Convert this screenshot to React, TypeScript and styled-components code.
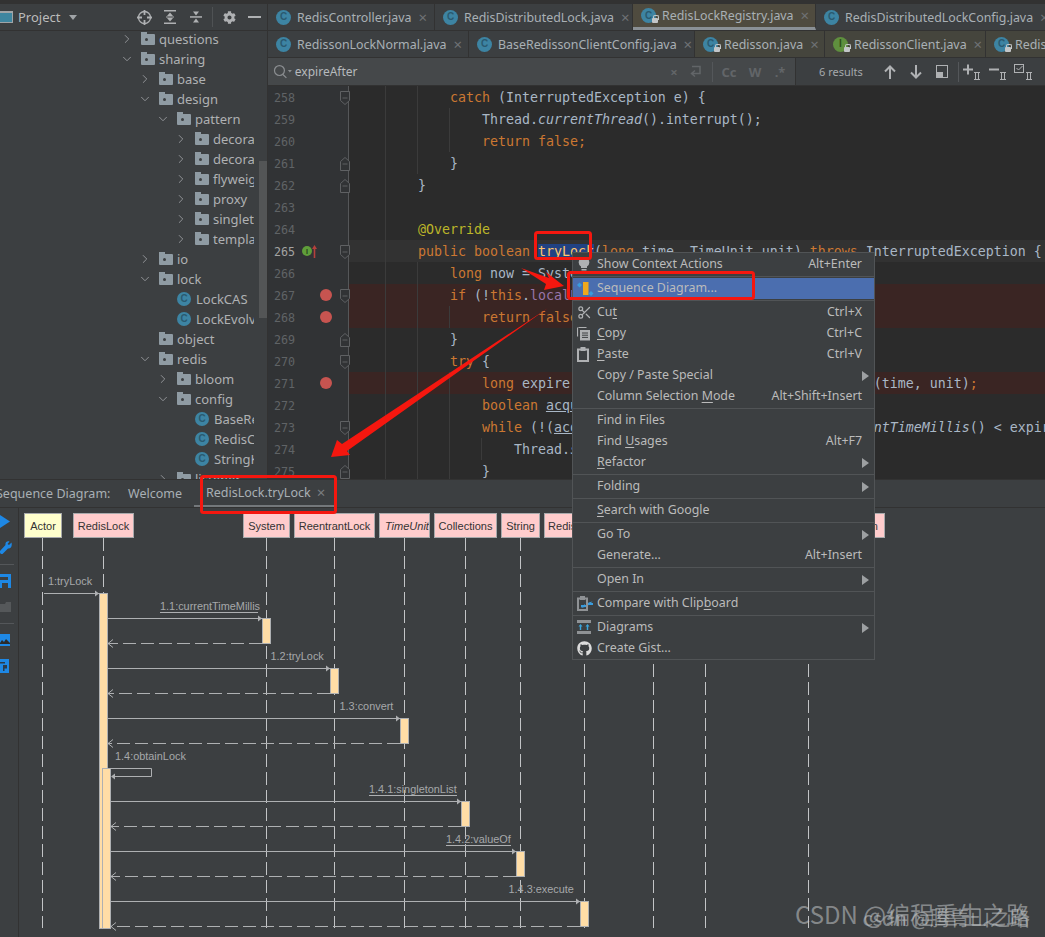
// App.tsx
import React from "react";
import styled, { createGlobalStyle } from "styled-components";
import { ChevronRight, ChevronDown, Scissors } from "lucide-react";
import { FaCog, FaGithub } from "react-icons/fa";

const uiFont = `"Noto Sans", "Open Sans", sans-serif`;
const monoFont = `"DejaVu Sans Mono", "Liberation Mono", monospace`;

const GlobalStyle = createGlobalStyle`
  html, body { margin: 0; padding: 0; background: #3c3f41; }
  * { box-sizing: border-box; }
`;

// Page shell
const Page = styled.div`
  position: relative;
  width: 1045px;
  height: 937px;
  overflow: hidden;
  display: flex;
  flex-direction: column;
  background: #3c3f41;
  font-family: ${uiFont};
  color: #bbbbbb;
`;

const TopArea = styled.div`
  display: flex;
  height: 479px;
  border-top: 4px solid #323232;
  flex: none;
`;

// Project panel
const ProjectPanel = styled.aside`
  position: relative;
  width: 268px;
  flex: none;
  border-right: 1px solid #323232;
  overflow: hidden;
`;

const PanelHeader = styled.div`
  position: relative;
  z-index: 1;
  height: 27px;
  display: flex;
  align-items: center;
  border-bottom: 1px solid #323232;
  background: #3c3f41;
  font-size: 13px;
`;

const ProjectSquare = styled.span`
  width: 13px;
  height: 12px;
  margin-right: 5px;
  flex: none;
  border: 1px solid #a0a4a7;
  border-left: none;
  border-top-width: 2px;
  background: #3e86a0;
`;

const Caret = styled.span`
  width: 0;
  height: 0;
  margin-left: 9px;
  flex: none;
  border-left: 4px solid transparent;
  border-right: 4px solid transparent;
  border-top: 5px solid #a0a4a7;
`;

const HeaderTools = styled.div`
  margin-left: 54px;
  display: flex;
  align-items: center;
  color: #afb1b3;
`;

const HeaderTool = styled.span<{ $w?: number }>`
  width: ${(p) => p.$w ?? 26}px;
  flex: none;
  display: flex;
  justify-content: center;
`;

const ToolDivider = styled.span`
  width: 1px;
  height: 20px;
  margin: 0 4px 0 3px;
  flex: none;
  background: #4f5254;
`;

const TreeClip = styled.div`
  width: 254px;
  margin-top: -2px;
  overflow: hidden;
`;

const TreeRow = styled.div<{ $depth: number }>`
  height: 20px;
  display: flex;
  align-items: center;
  padding-left: ${(p) => 120 + p.$depth * 18}px;
  font-size: 13px;
  white-space: nowrap;
  color: #afb1b3;
`;

const Twisty = styled.span`
  width: 14px;
  margin-right: 7px;
  flex: none;
  display: flex;
  justify-content: center;
  color: #9a9da0;
`;

const FolderMark = styled.span`
  position: relative;
  width: 14px;
  height: 11px;
  margin-right: 4px;
  flex: none;
  background: #8f9ba3;
  border-radius: 0 1px 1px 1px;
  &::before {
    content: "";
    position: absolute;
    left: 0;
    top: -2px;
    width: 6px;
    height: 2px;
    background: #8f9ba3;
  }
  &::after {
    content: "";
    position: absolute;
    left: 4px;
    top: 4px;
    width: 3px;
    height: 3px;
    border-radius: 50%;
    background: #3c3f41;
  }
`;

const ClassMark = styled.span<{ $kind?: "C" | "I"; $size?: number }>`
  position: relative;
  width: ${(p) => p.$size ?? 14}px;
  height: ${(p) => p.$size ?? 14}px;
  flex: none;
  display: flex;
  align-items: center;
  justify-content: center;
  border-radius: 50%;
  background: ${(p) => (p.$kind === "I" ? "#5f8f3e" : "#3d84a3")};
  color: ${(p) => (p.$kind === "I" ? "#2f4f1c" : "#2a5a70")};
  font-family: "Liberation Sans", sans-serif;
  font-size: 10px;
  font-weight: 700;
  line-height: 1;
`;

const TreeClass = styled(ClassMark)`
  margin-right: 5px;
`;

const ScrollThumb = styled.div`
  position: absolute;
  left: 259px;
  top: 157px;
  width: 8px;
  height: 157px;
  background: #535556;
`;

// Editor column
const EditorColumn = styled.section`
  flex: 1;
  min-width: 0;
  display: flex;
  flex-direction: column;
`;

const TabRow = styled.div`
  height: 27px;
  flex: none;
  display: flex;
  overflow: hidden;
  border-bottom: 1px solid #323232;
`;

const Tab = styled.div<{ $w: number; $active?: boolean; $tint?: boolean }>`
  position: relative;
  width: ${(p) => p.$w}px;
  flex: none;
  display: flex;
  align-items: center;
  padding-left: 8px;
  border-right: 1px solid #323232;
  font-size: 12.4px;
  white-space: nowrap;
  color: #a9b0b5;
  background: ${(p) =>
    p.$active ? "#4f4b3f" : p.$tint ? "#45453d" : "transparent"};
  ${(p) => (p.$active ? "border-bottom: 3px solid #8a9095;" : "")}
`;

const TabLabel = styled.span`
  margin: 0 7px 0 6px;
`;

const TabClose = styled.span`
  color: #6f7275;
  font-size: 15px;
  line-height: 1;
`;

const LockBadge = styled.span`
  position: absolute;
  right: -2px;
  bottom: 0;
  width: 6px;
  height: 5px;
  border-radius: 1px;
  background: #c3c6c8;
  &::before {
    content: "";
    position: absolute;
    left: 1px;
    top: -3px;
    width: 4px;
    height: 4px;
    border: 1px solid #c3c6c8;
    border-bottom: none;
    border-radius: 2px 2px 0 0;
  }
`;

const FindBar = styled.div`
  height: 28px;
  flex: none;
  display: flex;
  align-items: center;
  border-bottom: 1px solid #323232;
  font-size: 12px;
`;

const FindField = styled.div`
  width: 528px;
  height: 100%;
  flex: none;
  display: flex;
  align-items: center;
  padding-left: 5px;
  border-right: 1px solid #323232;
  background: #45484a;
  color: #b6babd;
`;

const FindText = styled.span`
  margin-left: 2px;
  width: 376px;
`;

const FindOption = styled.span<{ $w: number }>`
  width: ${(p) => p.$w}px;
  flex: none;
  display: flex;
  justify-content: center;
  color: #626568;
  font-weight: 700;
  font-size: 13px;
`;

const FindRule = styled.span`
  width: 1px;
  height: 20px;
  flex: none;
  background: #54575a;
`;

const ResultRule = styled(FindRule)`
  margin-left: 3px;
`;

const ResultCount = styled.span`
  margin: 0 14px 0 23px;
  font-size: 11px;
  color: #a5a9ac;
`;

const FindTool = styled.span`
  width: 26px;
  flex: none;
  display: flex;
  justify-content: center;
`;

const CodeArea = styled.div`
  flex: 1;
  min-height: 0;
  overflow: hidden;
  font-family: ${monoFont};
  font-size: 13.29px;
  background: #2b2b2b;
`;

const CodeRow = styled.div`
  display: flex;
  height: 22px;
`;

const Gutter = styled.div`
  position: relative;
  z-index: 1;
  width: 81px;
  flex: none;
  display: flex;
  align-items: center;
  background: #313335;
  border-right: 1px solid #555759;
`;

const LineNumber = styled.span<{ $current?: boolean }>`
  width: 27px;
  padding-top: 2px;
  flex: none;
  text-align: right;
  font-size: 11.7px;
  color: ${(p) => (p.$current ? "#a4a3a3" : "#606366")};
`;

const GutterMark = styled.span`
  width: 45px;
  flex: none;
  display: flex;
  align-items: center;
`;

const Breakpoint = styled.span`
  width: 12px;
  height: 12px;
  margin-left: 25px;
  border-radius: 50%;
  background: #c75450;
`;

const OverrideMark = styled.span`
  width: 10px;
  height: 10px;
  margin-left: 7px;
  display: flex;
  align-items: center;
  justify-content: center;
  border-radius: 50%;
  background: #5f9e3a;
  color: #24401a;
  font-family: "Liberation Sans", sans-serif;
  font-size: 7px;
  font-weight: 700;
  line-height: 1;
`;

const UpArrow = styled.svg`
  display: block;
  margin-left: 0;
`;

const FoldSlot = styled.span`
  width: 10px;
  height: 14px;
  margin: 2px -5px 0 0;
  flex: none;
`;

type Tone = "plain" | "current" | "break";

const lineBg: Record<Tone, string> = {
  plain: "#2b2b2b",
  current: "#323232",
  break: "#3a2523",
};

const CodeLine = styled.div<{ $tone: Tone; $guides: number[] }>`
  flex: 1;
  min-width: 0;
  padding-left: 37px;
  line-height: 24px;
  white-space: pre;
  overflow: hidden;
  color: #a9b7c6;
  background: ${(p) =>
    [
      ...p.$guides.map(
        (g) =>
          `linear-gradient(#3b3b3b, #3b3b3b) ${36 + g * 32}px 0 / 1px 100% no-repeat`
      ),
      lineBg[p.$tone],
    ].join(", ")};
`;

const Kw = styled.span`
  color: #cc7832;
`;
const Ann = styled.span`
  color: #bbb529;
`;
const Ital = styled.span`
  font-style: italic;
`;
const Fld = styled.span`
  color: #9876aa;
`;
const Sel = styled.span`
  background: #214283;
  color: #ffc66d;
`;
const Und = styled.span`
  text-decoration: underline;
`;

// Bottom tool window
const BottomPanel = styled.section`
  flex: 1;
  min-height: 0;
  display: flex;
  flex-direction: column;
`;

const DiagramTabs = styled.div`
  height: 29px;
  flex: none;
  display: flex;
  align-items: center;
  border-top: 1px solid #323232;
  border-bottom: 1px solid #323232;
  font-size: 12.5px;
  color: #a9b0b5;
`;

const DiagramTitle = styled.span`
  margin-left: -4px;
  width: 120px;
  flex: none;
  white-space: nowrap;
`;

const DiagramTab = styled.span<{ $active?: boolean }>`
  height: 100%;
  display: flex;
  align-items: center;
  padding: 0 12px;
  ${(p) => (p.$active ? "border-bottom: 2px solid #74787b;" : "")}
`;

const DiagramClose = styled.span`
  margin-left: 6px;
  color: #7a7d80;
  font-size: 15px;
  line-height: 1;
`;

const DiagramBody = styled.div`
  flex: 1;
  min-height: 0;
  display: flex;
`;

const SideBar = styled.div`
  width: 19px;
  flex: none;
  display: flex;
  flex-direction: column;
  align-items: flex-start;
  border-right: 1px solid #323232;
  overflow: hidden;
`;

const SideItem = styled.span<{ $mt: number }>`
  margin-top: ${(p) => p.$mt}px;
  display: flex;
`;

const SideRule = styled.span<{ $mt: number }>`
  width: 14px;
  height: 1px;
  margin-top: ${(p) => p.$mt}px;
  background: #54575a;
  flex: none;
`;

const DiagramCanvas = styled.svg`
  display: block;
  flex: 1;
  min-width: 0;
`;

const HeadText = styled.text<{ $italic?: boolean }>`
  font-family: "Liberation Sans", Arial, sans-serif;
  font-size: 11px;
  fill: #333333;
  font-style: ${(p) => (p.$italic ? "italic" : "normal")};
`;

const MessageText = styled.text`
  font-family: "Liberation Sans", Arial, sans-serif;
  font-size: 10.9px;
  fill: #a6a8aa;
`;

// Context menu, floats over the editor and the diagram
const Menu = styled.div`
  position: absolute;
  z-index: 3;
  left: 572px;
  top: 252px;
  width: 303px;
  height: 408px;
  padding-top: 1px;
  background: #3c3f41;
  border: 1px solid #515456;
  font-size: 12.4px;
`;

const MenuRow = styled.div<{ $selected?: boolean }>`
  height: 21px;
  display: flex;
  align-items: center;
  padding: 0 12px 2px 0;
  white-space: nowrap;
  background: ${(p) => (p.$selected ? "#4b6eaf" : "transparent")};
  color: #bbbbbb;
  u {
    text-underline-offset: 2px;
  }
`;

const MenuIcon = styled.span`
  width: 24px;
  height: 16px;
  margin-top: 2px;
  flex: none;
  display: flex;
  align-items: center;
  padding-left: 4px;
`;

const MenuLabel = styled.span`
  flex: 1;
`;

const MenuArrow = styled.span`
  width: 0;
  height: 0;
  margin: 2px -7px 0 0;
  border-top: 5px solid transparent;
  border-bottom: 5px solid transparent;
  border-left: 7px solid #9da0a2;
`;

const MenuSep = styled.div`
  height: 3px;
  display: flex;
  align-items: center;
  &::before {
    content: "";
    flex: 1;
    height: 1px;
    background: #515456;
  }
`;

// Screenshot markup on top of everything
const Annotations = styled.svg`
  position: absolute;
  z-index: 4;
  left: 0;
  top: 0;
  pointer-events: none;
`;

const Watermark = styled.div<{ $right: number; $bottom: number; $size: number }>`
  position: absolute;
  z-index: 5;
  right: ${(p) => p.$right}px;
  bottom: ${(p) => p.$bottom}px;
  font-family: "Noto Sans CJK SC", "Noto Sans", sans-serif;
  font-size: ${(p) => p.$size}px;
  line-height: 1;
  white-space: nowrap;
  color: rgba(196, 200, 202, 0.55);
`;

// Data
interface TreeItem {
  depth: number;
  name: string;
  open?: boolean;
  kind?: "folder" | "class";
  leaf?: boolean;
}

const tree: TreeItem[] = [
  { depth: 0, name: "questions" },
  { depth: 0, name: "sharing", open: true },
  { depth: 1, name: "base" },
  { depth: 1, name: "design", open: true },
  { depth: 2, name: "pattern", open: true },
  { depth: 3, name: "decorator" },
  { depth: 3, name: "decorators" },
  { depth: 3, name: "flyweight" },
  { depth: 3, name: "proxy" },
  { depth: 3, name: "singleton" },
  { depth: 3, name: "template" },
  { depth: 1, name: "io" },
  { depth: 1, name: "lock", open: true },
  { depth: 2, name: "LockCAS", kind: "class", leaf: true },
  { depth: 2, name: "LockEvolve", kind: "class", leaf: true },
  { depth: 1, name: "object", leaf: true },
  { depth: 1, name: "redis", open: true },
  { depth: 2, name: "bloom" },
  { depth: 2, name: "config", open: true },
  { depth: 3, name: "BaseRedis", kind: "class", leaf: true },
  { depth: 3, name: "RedisConfig", kind: "class", leaf: true },
  { depth: 3, name: "StringKey", kind: "class", leaf: true },
  { depth: 2, name: "listener" },
];

interface TabItem {
  name: string;
  w: number;
  active?: boolean;
  tint?: boolean;
  locked?: boolean;
  kind?: "C" | "I";
}

const tabsOne: TabItem[] = [
  { name: "RedisController.java", w: 167 },
  { name: "RedisDistributedLock.java", w: 198 },
  { name: "RedisLockRegistry.java", w: 183, active: true, locked: true },
  { name: "RedisDistributedLockConfig.java", w: 240 },
];

const tabsTwo: TabItem[] = [
  { name: "RedissonLockNormal.java", w: 201 },
  { name: "BaseRedissonClientConfig.java", w: 226 },
  { name: "Redisson.java", w: 130, tint: true, locked: true },
  { name: "RedissonClient.java", w: 161, kind: "I", tint: true, locked: true },
  { name: "RedissonLock.java", w: 160, tint: true, locked: true },
];

type Fold = "down" | "up";

interface LineItem {
  n: number;
  fold?: Fold;
  bp?: boolean;
  tone?: Tone;
  guides?: number[];
  code?: React.ReactNode;
}

const lines: LineItem[] = [
  { n: 258, fold: "down", code: <>        <Kw>catch</Kw> (InterruptedException e) {"{"}</> },
  { n: 259, guides: [0, 1, 2], code: <>            Thread.<Ital>currentThread</Ital>().interrupt();</> },
  { n: 260, guides: [0, 1, 2], code: <>            <Kw>return false;</Kw></> },
  { n: 261, fold: "up", code: <>        {"}"}</> },
  { n: 262, fold: "up", guides: [0], code: <>    {"}"}</> },
  { n: 263, guides: [0] },
  { n: 264, guides: [0], code: <>    <Ann>@Override</Ann></> },
  {
    n: 265,
    fold: "down",
    tone: "current",
    guides: [0],
    code: (
      <>
        {"    "}<Kw>public boolean</Kw> <Sel>tryLock</Sel>(<Kw>long</Kw> time, TimeUnit unit) <Kw>throws</Kw> InterruptedException {"{"}
      </>
    ),
  },
  { n: 266, code: <>        <Kw>long</Kw> now = System.currentTimeMillis();</> },
  { n: 267, fold: "down", bp: true, tone: "break", code: <>        <Kw>if</Kw> (!<Kw>this</Kw>.<Fld>localLock</Fld>.tryLock()) {"{"}</> },
  { n: 268, bp: true, tone: "break", guides: [0, 1, 2], code: <>            <Kw>return false;</Kw></> },
  { n: 269, fold: "up", code: <>        {"}"}</> },
  { n: 270, fold: "down", code: <>        <Kw>try</Kw> {"{"}</> },
  {
    n: 271,
    bp: true,
    tone: "break",
    guides: [0, 1, 2],
    code: (
      <>
        {"            "}<Kw>long</Kw> expire = now + TimeUnit.MILLISECONDS.convert(time, unit)<Kw>;</Kw>
      </>
    ),
  },
  { n: 272, guides: [0, 1, 2], code: <>            <Kw>boolean</Kw> <Und>acquired</Und> = <Kw>false;</Kw></> },
  {
    n: 273,
    fold: "down",
    guides: [0, 1, 2],
    code: (
      <>
        {"            "}<Kw>while</Kw> (!(<Und>acquired</Und> = tryAcquire()) && System.<Ital>currentTimeMillis</Ital>() &lt; expire) {"{"}
      </>
    ),
  },
  { n: 274, guides: [0, 1, 2, 3], code: <>                Thread.<Ital>sleep</Ital>(100);</> },
  { n: 275, fold: "up", guides: [0, 1, 2], code: <>            {"}"}</> },
];

type MenuEntry =
  | "sep"
  | {
      label: React.ReactNode;
      shortcut?: string;
      submenu?: boolean;
      selected?: boolean;
      icon?: React.ReactNode;
    };

const BulbIcon = () => (
  <svg width="14" height="16" viewBox="0 0 14 16">
    <path d="M7 0a5.2 5.2 0 0 0-3 9.5V11h6V9.500A5.200 5.200 0 0 0 7 0z" fill="#afb1b3" />
    <rect x="4.500" y="12" width="5" height="1.500" fill="#afb1b3" />
    <rect x="5.500" y="14" width="3" height="1.500" fill="#afb1b3" />
  </svg>
);

const SequenceIcon = () => (
  <svg width="18" height="16" viewBox="0 0 18 16">
    <rect x="6" y="1" width="5.500" height="13" fill="#f0a81e" />
    <path d="M2.500 1.500l2.500 2.500-2.500 2.500L0 4z" fill="#3a9bdc" />
    <path d="M14 10l2.500 2.500L14 15l-2.500-2.500z" fill="#3a9bdc" />
  </svg>
);

const CopyIcon = () => (
  <svg width="14" height="14" viewBox="0 0 14 14" fill="none" stroke="#afb1b3">
    <path d="M1.500.5h8M.500.500v9" strokeWidth="1.200" />
    <rect x="3" y="3" width="10" height="10.500" fill="#afb1b3" stroke="none" />
    <path d="M5 6h6M5 8.200h6M5 10.400h6" stroke="#3c3f41" strokeWidth="1" />
  </svg>
);

const PasteIcon = () => (
  <svg width="14" height="15" viewBox="0 0 14 15" fill="none">
    <rect x="1" y="2.500" width="10" height="11.500" stroke="#afb1b3" strokeWidth="2" />
    <rect x="3.500" y="0" width="5" height="4" fill="#afb1b3" />
  </svg>
);

const CompareIcon = () => (
  <svg width="16" height="15" viewBox="0 0 16 15" fill="none">
    <rect x="1" y="2.500" width="9" height="11.500" stroke="#8f9295" strokeWidth="2" />
    <rect x="3" y="0" width="5" height="4" fill="#8f9295" />
    <path d="M4 12l4-4v3h0zM15.500 5.500l-4 4v-3z" fill="#3a9bdc" />
    <rect x="4" y="9" width="5" height="2" fill="#3a9bdc" />
    <rect x="11" y="7" width="5" height="2" fill="#3a9bdc" />
  </svg>
);

const DiagramsIcon = () => (
  <svg width="15" height="15" viewBox="0 0 15 15">
    <rect width="14" height="3" fill="#8f9295" />
    <rect y="11" width="14" height="3" fill="#8f9295" />
    <path d="M3.500 4l2 2.500h-1.300V10h-1.400V6.500H1.500zM10.500 4l2 2.500h-1.300V10H9.800V6.500H8.500z" fill="#3aa5dc" />
  </svg>
);

const menu: MenuEntry[] = [
  { label: "Show Context Actions", shortcut: "Alt+Enter", icon: <BulbIcon /> },
  "sep",
  { label: "Sequence Diagram...", selected: true, icon: <SequenceIcon /> },
  "sep",
  { label: <>Cu<u>t</u></>, shortcut: "Ctrl+X", icon: <Scissors size={15} color="#afb1b3" strokeWidth={2} /> },
  { label: <><u>C</u>opy</>, shortcut: "Ctrl+C", icon: <CopyIcon /> },
  { label: <><u>P</u>aste</>, shortcut: "Ctrl+V", icon: <PasteIcon /> },
  { label: "Copy / Paste Special", submenu: true },
  { label: <>Column Selection <u>M</u>ode</>, shortcut: "Alt+Shift+Insert" },
  "sep",
  { label: "Find in Files" },
  { label: <>Find <u>U</u>sages</>, shortcut: "Alt+F7" },
  { label: <><u>R</u>efactor</>, submenu: true },
  "sep",
  { label: "Folding", submenu: true },
  "sep",
  { label: <><u>S</u>earch with Google</> },
  "sep",
  { label: "Go To", submenu: true },
  { label: "Generate...", shortcut: "Alt+Insert" },
  "sep",
  { label: "Open In", submenu: true },
  "sep",
  { label: <>Compare with Clip<u>b</u>oard</>, icon: <CompareIcon /> },
  "sep",
  { label: "Diagrams", submenu: true, icon: <DiagramsIcon /> },
  { label: "Create Gist...", icon: <FaGithub size={15} color="#dcdcdc" /> },
];

// Sequence diagram data, in page coordinates
const heads = [
  { name: "Actor", x: 24, w: 37, actor: true },
  { name: "RedisLock", x: 73, w: 60 },
  { name: "System", x: 243, w: 46 },
  { name: "ReentrantLock", x: 294, w: 80 },
  { name: "TimeUnit", x: 379, w: 50, italic: true, tx: 385 },
  { name: "Collections", x: 434, w: 62 },
  { name: "String", x: 501, w: 38 },
  { name: "RedisTemplate", x: 544, w: 80 },
  { name: "RedisLockExpiredException", x: 732, w: 152, tx: 741 },
];

const lifelines = [42.5, 103.5, 266.5, 334.5, 404.5, 465.5, 520.5, 584.5, 653.5, 705.5, 808.5];

const activations = [
  { x: 99.5, y: 593.5, h: 335 },
  { x: 262.5, y: 618.5, h: 25 },
  { x: 330.5, y: 668.5, h: 25 },
  { x: 400.5, y: 718.5, h: 25 },
  { x: 102.5, y: 768.5, h: 160 },
  { x: 461.5, y: 801.5, h: 25 },
  { x: 516.5, y: 851.5, h: 25 },
  { x: 580.5, y: 901.5, h: 25 },
];

const calls = [
  { label: "1:tryLock", tx: 48, ty: 585, y: 593.5, from: 44, to: 99 },
  { label: "1.1:currentTimeMillis", tx: 160, ty: 610, y: 618.5, from: 107.5, to: 262, under: 258 },
  { label: "1.2:tryLock", tx: 270.5, ty: 660, y: 668.5, from: 107.5, to: 330 },
  { label: "1.3:convert", tx: 339.5, ty: 710, y: 718.5, from: 107.5, to: 400 },
  { label: "1.4.1:singletonList", tx: 369, ty: 793, y: 801.5, from: 110.5, to: 461, under: 457 },
  { label: "1.4.2:valueOf", tx: 446, ty: 843, y: 851.5, from: 110.5, to: 516, under: 511 },
  { label: "1.4.3:execute", tx: 508.5, ty: 893, y: 901.5, from: 110.5, to: 580 },
];

const returns = [
  { y: 643.5, from: 262, to: 108 },
  { y: 693.5, from: 330, to: 108 },
  { y: 743.5, from: 400, to: 108 },
  { y: 826.5, from: 461, to: 111 },
  { y: 876.5, from: 516, to: 111 },
  { y: 926.5, from: 580, to: 111 },
];

const LINE = "#aeb0b2";

const SequenceDiagram = () => (
  <DiagramCanvas width="1026" height="429" viewBox="19 508 1026 429">
    {lifelines.map((x) => (
      <line key={x} x1={x} x2={x} y1={538} y2={928} stroke="#c2c4c6" strokeDasharray="13 5" />
    ))}
    {heads.map((h) => (
      <g key={h.name}>
        <rect
          x={h.x + 0.5}
          y={513.5}
          width={h.w}
          height={24}
          fill={h.actor ? "#ffffcc" : "#ffcccc"}
          stroke="#a8aaac"
        />
        <svg x={h.x + 1} y={514} width={h.w - 1} height={23}>
          <HeadText
            x={h.tx ? h.tx - h.x - 1 : (h.w - 1) / 2}
            y={16}
            textAnchor={h.tx ? "start" : "middle"}
            $italic={h.italic}
          >
            {h.name}
          </HeadText>
        </svg>
      </g>
    ))}
    {activations.map((a) => (
      <rect key={a.x + "-" + a.y} x={a.x} y={a.y} width={8} height={a.h} fill="#ffdda6" stroke="#aeb0b2" />
    ))}
    {calls.map((c) => (
      <g key={c.label}>
        <MessageText x={c.tx} y={c.ty}>{c.label}</MessageText>
        {c.under && <line x1={c.tx} x2={c.under} y1={c.ty + 2.500} y2={c.ty + 2.500} stroke={LINE} />}
        <line x1={c.from} x2={c.to} y1={c.y} y2={c.y} stroke={LINE} />
        <path d={`M${c.to} ${c.y}l-4-3v6z`} fill={LINE} />
      </g>
    ))}
    {returns.map((r) => (
      <g key={r.y} fill="none" stroke={LINE}>
        <line x1={r.from} x2={r.to} y1={r.y} y2={r.y} strokeDasharray="13 5" />
        <path d={`M${r.to + 5} ${r.y - 4}l-5 4 5 4`} />
      </g>
    ))}
    <MessageText x={115} y={760}>1.4:obtainLock</MessageText>
    <path d="M110.500 768.500H151.500V776.500H112" fill="none" stroke={LINE} />
    <path d="M111 776.500l4-3v6z" fill={LINE} />
  </DiagramCanvas>
);

const FoldMark = ({ dir }: { dir: Fold }) => (
  <FoldSlot>
    <svg width="10" height="14" viewBox="0 0 10 14" fill="#313335" stroke="#5f6163">
      {dir === "down" ? (
        <path d="M.500.500h9v9l-4.500 4-4.500-4z" />
      ) : (
        <path d="M.500 13.500h9v-9l-4.500-4-4.500 4z" />
      )}
      <path d="M2.500 7h5" />
    </svg>
  </FoldSlot>
);

const TabView = ({ tab }: { tab: TabItem }) => (
  <Tab $w={tab.w} $active={tab.active} $tint={tab.tint}>
    <ClassMark $kind={tab.kind} $size={15}>
      {tab.kind ?? "C"}
      {tab.locked && <LockBadge />}
    </ClassMark>
    <TabLabel>{tab.name}</TabLabel>
    <TabClose>×</TabClose>
  </Tab>
);

const iconGrey = "#afb1b3";

const SplitIcon = ({ mark }: { mark: "plus" | "minus" | "check" }) => (
  <svg width="20" height="18" viewBox="0 0 20 18" fill="none" stroke={iconGrey}>
    {mark === "plus" && <path d="M1 6.500h10M6 1.500v10" strokeWidth="2" />}
    {mark === "minus" && <path d="M1 6.500h10" strokeWidth="2" />}
    {mark === "check" && (
      <>
        <rect x=".5" y="1.500" width="9" height="8" />
        <path d="M2.500 5l2 2 4-4" />
      </>
    )}
    <path d="M12 9.500h6M12 16.500h6M13.500 10v6M16.500 10v6" strokeWidth="1" />
  </svg>
);

const App: React.FC = () => {
  return (
    <Page>
      <GlobalStyle />
      <TopArea>
        <ProjectPanel>
          <PanelHeader>
            <ProjectSquare />
            Project
            <Caret />
            <HeaderTools>
              <HeaderTool>
                <svg width="15" height="15" viewBox="0 0 15 15" fill="none" stroke={iconGrey} strokeWidth="1.300">
                  <circle cx="7.500" cy="7.500" r="6" />
                  <path d="M7.500 0v5M7.500 10v5M0 7.500h5M10 7.500h5" strokeWidth="1.800" />
                </svg>
              </HeaderTool>
              <HeaderTool>
                <svg width="14" height="14" viewBox="0 0 14 14" fill={iconGrey}>
                  <rect width="12" height="1.500" x="1" />
                  <rect width="12" height="1.500" x="1" y="12.500" />
                  <path d="M7 2.500l3 3.500H4zM7 11.500L4 8h6z" />
                  <rect width="8" height="1" x="3" y="6.500" />
                </svg>
              </HeaderTool>
              <HeaderTool>
                <svg width="14" height="14" viewBox="0 0 14 14" fill={iconGrey}>
                  <rect width="12" height="1.500" x="1" y="6.200" />
                  <path d="M7 5.500L4 1.500h6zM7 8.500l3 4H4z" />
                </svg>
              </HeaderTool>
              <ToolDivider />
              <HeaderTool $w={24}>
                <FaCog size={13} />
              </HeaderTool>
              <HeaderTool $w={26}>
                <svg width="13" height="3" viewBox="0 0 13 3">
                  <rect width="13" height="2" fill={iconGrey} />
                </svg>
              </HeaderTool>
            </HeaderTools>
          </PanelHeader>
          <TreeClip>
            {tree.map((item, i) => (
              <TreeRow key={i} $depth={item.depth}>
                <Twisty>
                  {!item.leaf &&
                    (item.open ? (
                      <ChevronDown size={14} strokeWidth={1.500} />
                    ) : (
                      <ChevronRight size={14} strokeWidth={1.500} />
                    ))}
                </Twisty>
                {item.kind === "class" ? <TreeClass>C</TreeClass> : <FolderMark />}
                {item.name}
              </TreeRow>
            ))}
          </TreeClip>
          <ScrollThumb />
        </ProjectPanel>

        <EditorColumn>
          <TabRow>
            {tabsOne.map((t) => (
              <TabView key={t.name} tab={t} />
            ))}
          </TabRow>
          <TabRow>
            {tabsTwo.map((t) => (
              <TabView key={t.name} tab={t} />
            ))}
          </TabRow>
          <FindBar>
            <FindField>
              <svg width="20" height="16" viewBox="0 0 20 16" fill="none" stroke="#8b8e91" strokeWidth="1.200">
                <circle cx="6.500" cy="6.500" r="5" />
                <path d="M10 10.500l3.500 3.500" />
                <path d="M15 6h4l-2 2.500z" fill="#8b8e91" stroke="none" />
              </svg>
              <FindText>expireAfter</FindText>
              <FindOption $w={12}>×</FindOption>
              <FindOption $w={32}>
                <svg width="14" height="14" viewBox="0 0 14 14" fill="none" stroke="#626568" strokeWidth="1.500">
                  <path d="M3 1.500h8v7H3M6 5.500l-3.500 3 3.500 3" />
                </svg>
              </FindOption>
              <FindRule />
              <FindOption $w={32}>Cc</FindOption>
              <FindOption $w={20}>W</FindOption>
              <FindOption $w={30}>.*</FindOption>
            </FindField>
            <ResultCount>6 results</ResultCount>
            <FindTool>
              <svg width="12" height="14" viewBox="0 0 12 14" fill="none" stroke={iconGrey} strokeWidth="2">
                <path d="M6 14V2M1 6.500L6 1.500l5 5" />
              </svg>
            </FindTool>
            <FindTool>
              <svg width="12" height="14" viewBox="0 0 12 14" fill="none" stroke={iconGrey} strokeWidth="2">
                <path d="M6 0v12M1 7.500l5 5 5-5" />
              </svg>
            </FindTool>
            <FindTool>
              <svg width="12" height="13" viewBox="0 0 12 13">
                <rect x=".5" y=".5" width="11" height="12" fill="none" stroke={iconGrey} />
                <rect x="1" y="7" width="6" height="5" fill={iconGrey} />
              </svg>
            </FindTool>
            <ResultRule />
            <FindTool>
              <SplitIcon mark="plus" />
            </FindTool>
            <FindTool>
              <SplitIcon mark="minus" />
            </FindTool>
            <FindTool>
              <SplitIcon mark="check" />
            </FindTool>
          </FindBar>
          <CodeArea>
            {lines.map((l) => (
              <CodeRow key={l.n}>
                <Gutter>
                  <LineNumber $current={l.tone === "current"}>{l.n}</LineNumber>
                  <GutterMark>
                    {l.bp && <Breakpoint />}
                    {l.tone === "current" && (
                      <>
                        <OverrideMark>I</OverrideMark>
                        <UpArrow width="5" height="13" viewBox="0 0 5 13">
                          <path d="M2.500 0L5 4H3.300v9H1.700V4H0z" fill="#b5413c" />
                        </UpArrow>
                      </>
                    )}
                  </GutterMark>
                  {l.fold && <FoldMark dir={l.fold} />}
                </Gutter>
                <CodeLine $tone={l.tone ?? "plain"} $guides={l.guides ?? [0, 1]}>
                  {l.code}
                </CodeLine>
              </CodeRow>
            ))}
          </CodeArea>
        </EditorColumn>
      </TopArea>

      <BottomPanel>
        <DiagramTabs>
          <DiagramTitle>Sequence Diagram:</DiagramTitle>
          <DiagramTab>Welcome</DiagramTab>
          <DiagramTab $active>
            RedisLock.tryLock
            <DiagramClose>×</DiagramClose>
          </DiagramTab>
        </DiagramTabs>
        <DiagramBody>
          <SideBar>
            <SideItem $mt={7}>
              <svg width="11" height="13" viewBox="0 0 11 13">
                <path d="M0 0l10 6.500L0 13z" fill="#1e88e5" />
              </svg>
            </SideItem>
            <SideItem $mt={13}>
              <svg width="12" height="14" viewBox="0 0 12 14">
                <path d="M11.500 1.500L9 4 7.500 3 9.500.500C7 -.5 5 1.500 5.500 4L0 10c-.5 2 1 3.500 2.500 3L8 7.500c2.500.5 4.500-2 3.500-6z" fill="#1e88e5" />
              </svg>
            </SideItem>
            <SideRule $mt={9} />
            <SideItem $mt={9}>
              <svg width="11" height="14" viewBox="0 0 11 14">
                <path d="M0 0h11v14H0z" fill="#1e88e5" />
                <rect y="3" width="8" height="3" fill="#3c3f41" />
                <rect x="2" y="9" width="6" height="5" fill="#3c3f41" />
              </svg>
            </SideItem>
            <SideItem $mt={14}>
              <svg width="11" height="10" viewBox="0 0 11 10">
                <path d="M0 2h5l1-2h5v10H0z" fill="#55585a" />
              </svg>
            </SideItem>
            <SideRule $mt={11} />
            <SideItem $mt={10}>
              <svg width="10" height="12" viewBox="0 0 10 12">
                <rect width="10" height="12" fill="#1e88e5" />
                <path d="M0 9l2-3 2 2 2-3 4 4v1H0z" fill="#2b2b2b" />
              </svg>
            </SideItem>
            <SideItem $mt={13}>
              <svg width="9" height="14" viewBox="0 0 9 14">
                <rect width="9" height="14" fill="#1e88e5" />
                <path d="M3 6h4v3.500H4.500V12H3zM0 3h5v1.500H0z" fill="#2b3b4b" />
              </svg>
            </SideItem>
          </SideBar>
          <SequenceDiagram />
        </DiagramBody>
      </BottomPanel>

      <Menu>
        {menu.map((m, i) =>
          m === "sep" ? (
            <MenuSep key={i} />
          ) : (
            <MenuRow key={i} $selected={m.selected}>
              <MenuIcon>{m.icon}</MenuIcon>
              <MenuLabel>{m.label}</MenuLabel>
              {m.shortcut}
              {m.submenu && <MenuArrow />}
            </MenuRow>
          )
        )}
      </Menu>

      <Annotations width="1045" height="937" viewBox="0 0 1045 937">
        <g fill="none" stroke="#f5170f" strokeWidth="3">
          <rect x="535.500" y="232.500" width="55" height="26" rx="2" />
          <rect x="568.500" y="272.500" width="185" height="26" rx="2" />
          <rect x="201.500" y="476.500" width="134" height="36" rx="2" />
        </g>
        <path d="M521 268L549 278L546 272L564 286L544 290L546 284z" fill="#f5170f" />
        <path d="M548 308L347 451L350 455L331 457L337 440L342 444z" fill="#f5170f" />
      </Annotations>

      <Watermark $right={15} $bottom={11} $size={24}>CSDN @编程重生之路</Watermark>
      <Watermark $right={15} $bottom={9} $size={20}>csdn @腾青山之路</Watermark>
    </Page>
  );
};

export default App;
